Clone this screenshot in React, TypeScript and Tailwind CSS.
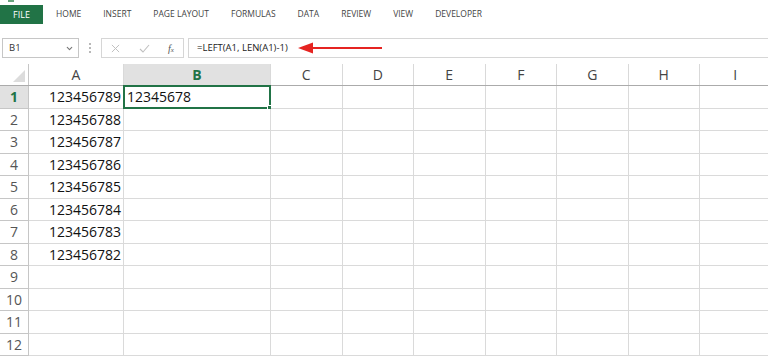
import { ChevronDown } from 'lucide-react';

const font = { fontFamily: '"Open Sans", "Noto Sans", "Liberation Sans", sans-serif' };

const tabs = ['HOME', 'INSERT', 'PAGE LAYOUT', 'FORMULAS', 'DATA', 'REVIEW', 'VIEW', 'DEVELOPER'];

const cols = [
  { label: 'A', w: 'w-[95px]' },
  { label: 'B', w: 'w-[147px]' },
  { label: 'C', w: 'w-[71.5px]' },
  { label: 'D', w: 'w-[71.5px]' },
  { label: 'E', w: 'w-[71.5px]' },
  { label: 'F', w: 'w-[71.5px]' },
  { label: 'G', w: 'w-[71.5px]' },
  { label: 'H', w: 'w-[71.5px]' },
  { label: 'I', w: 'w-[71.5px]' },
];

const values = ['123456789', '123456788', '123456787', '123456786', '123456785', '123456784', '123456783', '123456782'];

export default function App() {
  return (
    <div className="w-[768px] h-[357px] overflow-hidden bg-white flex flex-col" style={font}>
      <div className="h-[5px] relative">
        <div className="absolute left-[8px] top-0 w-[6px] h-[2px] bg-[#6aa57f]" />
      </div>

      {/* ribbon tabs */}
      <div className="h-[19px] flex items-center text-[8.5px] text-[#444]">
        <div className="w-[43px] h-full bg-[#217346] text-white flex items-center justify-center text-[9px]">FILE</div>
        <div className="flex ml-[13px] gap-[22px]">
          {tabs.map((t) => (
            <span key={t}>{t}</span>
          ))}
        </div>
      </div>

      <div className="h-[14px]" />

      {/* formula bar */}
      <div className="h-[20px] flex items-stretch">
        <div className="ml-[2px] w-[77px] border border-[#c6c6c6] flex items-center justify-between pl-[6px] pr-[4px] text-[9.5px] text-[#333]">
          <span>B1</span>
          <ChevronDown className="w-[9px] h-[9px] text-[#777]" strokeWidth={3} />
        </div>
        <div className="w-[22px] flex flex-col items-center justify-center gap-[2px]">
          <span className="w-[2px] h-[2px] bg-[#b8b8b8]" />
          <span className="w-[2px] h-[2px] bg-[#b8b8b8]" />
          <span className="w-[2px] h-[2px] bg-[#b8b8b8]" />
        </div>
        <div className="w-[83px] border border-[#d6d6d6] flex items-center justify-around text-[#b5b5b5]">
          <svg width="9" height="9" viewBox="0 0 10 10">
            <path d="M1 1 L9 9 M9 1 L1 9" stroke="#c0c0c0" strokeWidth="1.1" fill="none" />
          </svg>
          <svg width="11" height="9" viewBox="0 0 11 9">
            <path d="M1 5 L4 8 L10 1" stroke="#c0c0c0" strokeWidth="1.1" fill="none" />
          </svg>
          <span className="text-[10px] italic text-[#555]" style={{ fontFamily: '"Liberation Serif", serif' }}>
            f<span className="text-[7px]">x</span>
          </span>
        </div>
        <div className="ml-[4px] flex-1 border-y border-l border-[#d6d6d6] flex items-center pl-[8px] text-[9.5px] text-[#222] gap-[10px]">
          <span>=LEFT(A1, LEN(A1)-1)</span>
          <svg width="86" height="12" viewBox="0 0 86 12">
            <path d="M12 6 L84 6" stroke="#e52421" strokeWidth="2.2" />
            <path d="M0 6 L15 0.5 L15 11.5 Z" fill="#e52421" />
          </svg>
        </div>
      </div>

      <div className="h-[6px]" />

      {/* column headers */}
      <div className="h-[22px] flex border-b border-[#ababab]">
        <div className="w-[29px] shrink-0 border-r border-[#c6c6c6] relative">
          <svg className="absolute right-[3px] bottom-[3px]" width="12" height="12" viewBox="0 0 12 12">
            <path d="M12 0 L12 12 L0 12 Z" fill="#dcdcdc" />
          </svg>
        </div>
        {cols.map((c) => (
          <div
            key={c.label}
            className={`${c.w} shrink-0 border-r border-[#d9d9d9] flex items-center justify-center text-[14px] ${
              c.label === 'B' ? 'bg-[#e1e1e1] text-[#217346] font-bold' : 'text-[#444]'
            }`}
          >
            {c.label}
          </div>
        ))}
      </div>

      {/* rows */}
      {Array.from({ length: 12 }, (_, i) => {
        const row = i + 1;
        const sel = row === 1;
        return (
          <div key={row} className="h-[22.5px] shrink-0 flex">
            <div
              className={`w-[29px] shrink-0 border-r border-b border-[#c6c6c6] flex items-center justify-center text-[14px] ${
                sel ? 'bg-[#e1e1e1] text-[#217346] font-bold' : 'text-[#555]'
              }`}
            >
              {row}
            </div>
            {cols.map((c) => (
              <div
                key={c.label}
                className={`${c.w} shrink-0 border-r border-b border-[#dadada] flex items-center text-[14px] text-[#111] relative`}
              >
                {c.label === 'A' && values[i] && <span className="ml-auto pr-[2px]">{values[i]}</span>}
                {c.label === 'B' && sel && (
                  <div className="absolute -left-[1px] -top-[1px] -right-[1px] -bottom-[1px] border-2 border-[#217346] flex items-center pl-[2px]">
                    <span>12345678</span>
                    <div className="absolute -right-[3px] -bottom-[3px] w-[5px] h-[5px] bg-[#217346] border border-white" />
                  </div>
                )}
              </div>
            ))}
          </div>
        );
      })}
    </div>
  );
}
